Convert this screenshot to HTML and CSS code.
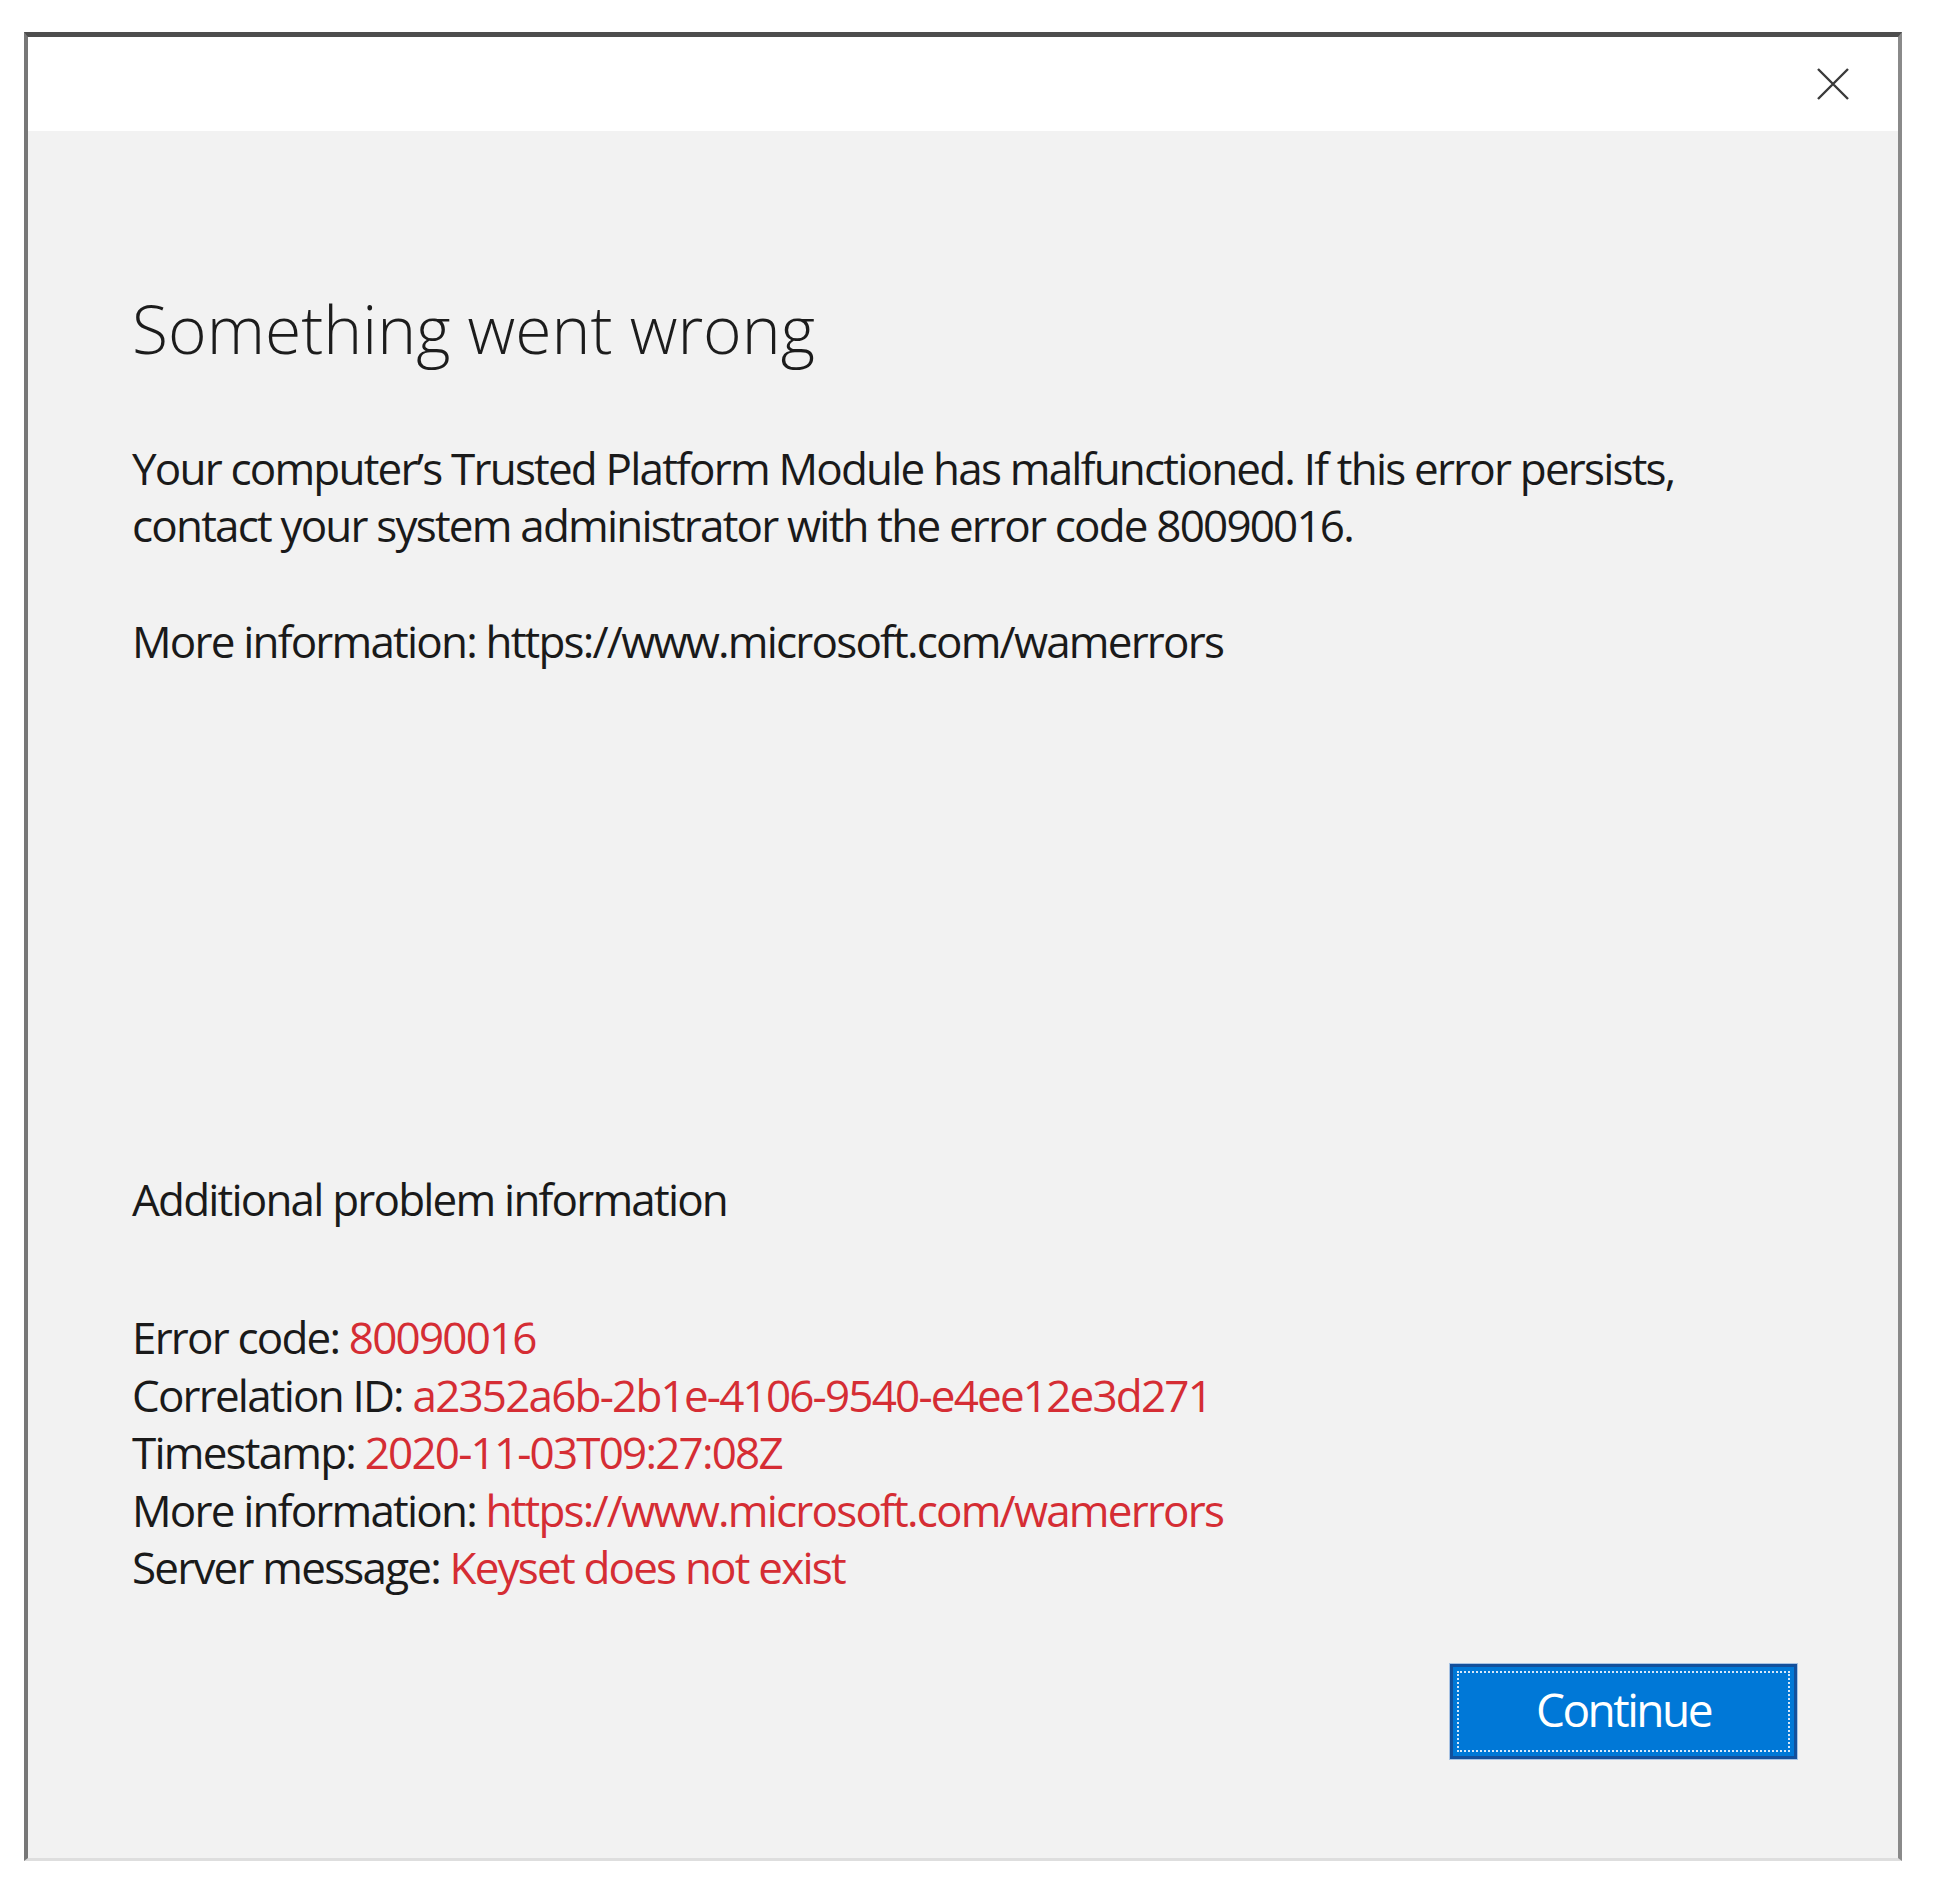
FILE: index.html
```html
<!DOCTYPE html>
<html lang="en">
<head>
<meta charset="utf-8">
<title>Something went wrong</title>
<link rel="stylesheet" href="styles.css">
</head>
<body>
<div class="window">
  <div class="titlebar">
    <button class="close" aria-label="Close">
      <svg width="34" height="32" viewBox="0 0 34 32"><path d="M2 1 L32 31 M32 1 L2 31" stroke="#3a3a3a" stroke-width="2.4" fill="none"/></svg>
    </button>
  </div>
  <div class="content">
    <h1 class="heading">Something went wrong</h1>
    <p class="body">Your computer’s Trusted Platform Module has malfunctioned. If this error persists,<br>contact your system administrator with the error code 80090016.</p>
    <p class="more">More information: https://www.microsoft.com/wamerrors</p>
    <p class="extra">Additional problem information</p>
    <div class="details">
      <div class="row">Error code: <span class="val">80090016</span></div>
      <div class="row">Correlation ID: <span class="val">a2352a6b-2b1e-4106-9540-e4ee12e3d271</span></div>
      <div class="row">Timestamp: <span class="val">2020-11-03T09:27:08Z</span></div>
      <div class="row">More information: <span class="val">https://www.microsoft.com/wamerrors</span></div>
      <div class="row">Server message: <span class="val">Keyset does not exist</span></div>
    </div>
    <div class="actions">
      <button class="continue">Continue</button>
    </div>
  </div>
</div>
</body>
</html>
```

FILE: styles.css
```css
html, body {
  margin: 0;
  padding: 0;
  background: #ffffff;
}

body {
  font-family: "Open Sans", "Noto Sans", sans-serif;
  color: #1a1a1a;
}

.window {
  box-sizing: border-box;
  margin: 32px 0 0 24px;
  width: 1878px;
  height: 1829px;
  border-top: 5px solid #4d4d4d;
  border-left: 4px solid #777777;
  border-right: 4px solid #8a8a8a;
  border-bottom: 3px solid #dedede;
  display: flex;
  flex-direction: column;
  background: #f2f2f2;
}

.titlebar {
  height: 94px;
  background: #ffffff;
  display: flex;
  justify-content: flex-end;
  align-items: flex-start;
  padding-right: 48px;
}

.close {
  margin-top: 31px;
  padding: 0;
  border: 0;
  background: transparent;
  width: 34px;
  height: 32px;
  display: block;
}

.close svg {
  display: block;
}

.content {
  flex: 1;
  background: #f2f2f2;
  padding: 0 101px 0 104px;
  display: flex;
  flex-direction: column;
}

.heading {
  margin: 157px 0 0 0;
  font-size: 66px;
  line-height: 80px;
  font-weight: 300;
  color: #1c1c1c;
}

.body,
.more,
.extra,
.details {
  font-size: 44px;
  letter-spacing: -1.8px;
}

.body {
  margin: 72px 0 0 0;
  line-height: 57px;
  white-space: nowrap;
}

.more {
  margin: 60px 0 0 0;
  line-height: 55px;
}

.extra {
  margin: 503px 0 0 0;
  line-height: 55px;
}

.details {
  margin-top: 82px;
  line-height: 57.5px;
}

.val {
  color: #d52d34;
}

.actions {
  margin-top: 67px;
  display: flex;
  justify-content: flex-end;
}

.continue {
  box-sizing: border-box;
  width: 347px;
  height: 95px;
  background: #0078d7;
  color: #ffffff;
  border: 3px solid #13509c;
  box-shadow: 0 0 0 1px #a9c4e4;
  outline: 2px dotted #d6e8fa;
  outline-offset: -9px;
  font-family: "Open Sans", "Noto Sans", sans-serif;
  font-size: 46px;
  letter-spacing: -2.5px;
  line-height: 1;
  padding: 0 0 4px 0;
}
```
